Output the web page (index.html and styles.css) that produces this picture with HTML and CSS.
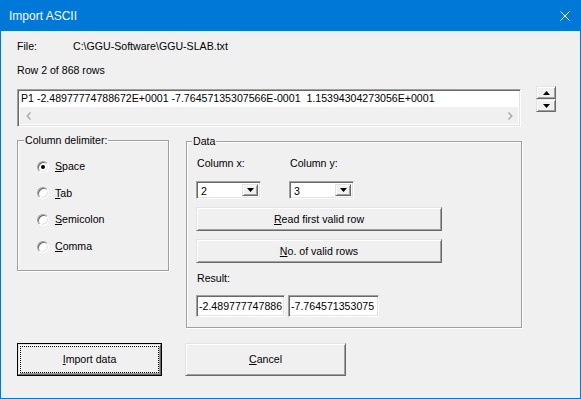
FILE: index.html
```html
<!DOCTYPE html>
<html>
<head>
<meta charset="utf-8">
<title>Import ASCII</title>
<link rel="stylesheet" href="styles.css">
</head>
<body>
<div class="window">
  <div class="titlebar">
    <span class="title">Import ASCII</span>
    <span class="close"><svg width="10" height="10" viewBox="0 0 10 10"><path d="M0.5 0.5L9.5 9.5M9.5 0.5L0.5 9.5" stroke="#fff" stroke-width="1"/></svg></span>
  </div>
  <div class="client">
    <div class="file-row"><span class="file-label">File:</span><span>C:\GGU-Software\GGU-SLAB.txt</span></div>
    <div class="row-info">Row 2 of 868 rows</div>
    <div class="preview-row">
      <div class="preview sunken">
        <div class="preview-text">P1 -2.48977774788672E+0001 -7.76457135307566E-0001&nbsp; 1.15394304273056E+0001</div>
        <div class="hscroll">
          <span class="sb-btn"><svg width="6" height="8" viewBox="0 0 6 8"><polyline points="4.5,0.5 1.2,4 4.5,7.5" fill="none" stroke="#a8a8a8" stroke-width="1.4"/></svg></span>
          <span class="sb-btn"><svg width="6" height="8" viewBox="0 0 6 8"><polyline points="1.5,0.5 4.8,4 1.5,7.5" fill="none" stroke="#a8a8a8" stroke-width="1.4"/></svg></span>
        </div>
      </div>
      <div class="spin">
        <div class="spin-btn raised"><svg width="7" height="4" viewBox="0 0 7 4"><polygon points="0,4 3.5,0 7,4" fill="#000"/></svg></div>
        <div class="spin-btn raised"><svg width="7" height="4" viewBox="0 0 7 4"><polygon points="0,0 7,0 3.5,4" fill="#000"/></svg></div>
      </div>
    </div>
    <div class="groups">
      <div class="group delim">
        <div class="legend">Column delimiter:</div>
        <div class="radio-list">
          <div class="radio-row"><span class="radio checked"></span><span><u>S</u>pace</span></div>
          <div class="radio-row"><span class="radio"></span><span><u>T</u>ab</span></div>
          <div class="radio-row"><span class="radio"></span><span><u>S</u>emicolon</span></div>
          <div class="radio-row"><span class="radio"></span><span><u>C</u>omma</span></div>
        </div>
      </div>
      <div class="group data">
        <div class="legend">Data</div>
        <div class="col-labels"><span class="col-x">Column x:</span><span>Column y:</span></div>
        <div class="combos">
          <div class="combo sunken"><span class="combo-val">2</span><span class="combo-btn raised"><svg width="7" height="4" viewBox="0 0 7 4"><polygon points="0,0 7,0 3.5,4" fill="#000"/></svg></span></div>
          <div class="combo sunken"><span class="combo-val">3</span><span class="combo-btn raised"><svg width="7" height="4" viewBox="0 0 7 4"><polygon points="0,0 7,0 3.5,4" fill="#000"/></svg></span></div>
        </div>
        <div class="btn raised wide"><span><u>R</u>ead first valid row</span></div>
        <div class="btn raised wide"><span><u>N</u>o. of valid rows</span></div>
        <div class="result-label">Result:</div>
        <div class="results">
          <div class="field sunken r1">-2.489777747886</div>
          <div class="field sunken r2">-7.764571353075</div>
        </div>
      </div>
    </div>
    <div class="actions">
      <div class="btn-default">
        <div class="btn raised fill"><div class="focus"><span><u>I</u>mport data</span></div></div>
      </div>
      <div class="btn raised cancel"><span><u>C</u>ancel</span></div>
    </div>
  </div>
</div>
</body>
</html>
```
FILE: styles.css
```css
* { box-sizing: border-box; }
html, body { margin: 0; padding: 0; background: #f0f0f0; }
body {
  font-family: "Liberation Sans", Arial, sans-serif;
  font-size: 10.6px;
  line-height: 13px;
  color: #000;
}
u { text-decoration: underline; text-underline-offset: 1px; }

.window {
  width: 581px;
  height: 399px;
  border: 1px solid #0078d7;
  border-top: 0;
  background: #f0f0f0;
  display: flex;
  flex-direction: column;
  overflow: hidden;
}
.titlebar {
  height: 31px;
  flex: none;
  background: #0078d7;
  display: flex;
  align-items: center;
  padding-left: 8px;
  color: #fff;
}
.title { font-size: 12px; line-height: 16px; }
.close {
  margin-left: auto;
  width: 30px;
  height: 31px;
  display: flex;
  align-items: center;
  justify-content: center;
}

.client { padding: 9px 0 0 16px; }

/* 3D edges */
.raised {
  background: #f0f0f0;
  border: 1px solid;
  border-color: #e3e3e3 #696969 #696969 #e3e3e3;
  box-shadow: inset 1px 1px 0 #fff, inset -1px -1px 0 #a0a0a0;
}
.sunken {
  background: #fff;
  border: 1px solid;
  border-color: #a0a0a0 #fff #fff #a0a0a0;
  box-shadow: inset 1px 1px 0 #696969, inset -1px -1px 0 #e3e3e3;
}

.file-row { display: flex; height: 13px; }
.file-label { width: 56px; }
.row-info { margin-top: 11px; }

.preview-row {
  margin-top: 9px;
  display: flex;
  align-items: flex-start;
  gap: 15px;
}
.preview {
  margin-top: 3px;
  width: 504px;
  height: 38px;
  padding: 2px;
  display: flex;
  flex-direction: column;
}
.preview-text {
  height: 17px;
  padding-left: 1px;
  white-space: nowrap;
  overflow: hidden;
}
.hscroll {
  height: 17px;
  background: #f0f0f0;
  display: flex;
  justify-content: space-between;
}
.sb-btn {
  width: 17px;
  height: 17px;
  display: flex;
  align-items: center;
  justify-content: center;
}
.spin {
  width: 20px;
  height: 26px;
  display: flex;
  flex-direction: column;
}
.spin-btn {
  height: 13px;
  display: flex;
  align-items: center;
  justify-content: center;
}
.spin-btn svg { display: block; }

.groups {
  margin-top: 13px;
  display: flex;
  align-items: flex-start;
  gap: 17px;
}
.group {
  border: 1px solid #a0a0a0;
  box-shadow: inset 1px 1px 0 #fff, 1px 1px 0 #fff;
}
.legend {
  width: fit-content;
  height: 13px;
  margin: -7px 0 -6px 6px;
  padding: 0 1px;
  background: #f0f0f0;
  white-space: nowrap;
}
.delim { width: 152px; height: 131px; }
.radio-list { padding-top: 12.3px; }
.radio-row {
  height: 26.67px;
  display: flex;
  align-items: center;
  gap: 6px;
  padding-left: 19px;
}
.radio {
  width: 12px;
  height: 12px;
  border-radius: 50%;
  background: #fff;
  border: 1px solid;
  border-color: #a0a0a0 #fff #fff #a0a0a0;
  box-shadow: inset 1px 1px 0 #696969, inset -1px -1px 0 #e3e3e3;
  display: flex;
  align-items: center;
  justify-content: center;
  flex: none;
}
.radio.checked::after {
  content: "";
  width: 4px;
  height: 4px;
  border-radius: 50%;
  background: #000;
}

.data {
  margin-top: 1px;
  width: 336px;
  height: 187px;
  padding-left: 9px;
}
.data .legend { margin-left: -4px; }
.col-labels { margin-top: 14.5px; display: flex; }
.col-x { width: 93px; padding-left: 1px; }
.col-labels span:last-child { padding-left: 1px; }
.combos { margin-top: 11.5px; display: flex; gap: 28px; }
.combo {
  width: 65px;
  height: 18px;
  padding: 2px;
  display: flex;
}
.combo-val { flex: 1; padding-left: 2px; line-height: 14px; }
.combo-btn {
  width: 16px;
  display: flex;
  align-items: center;
  justify-content: center;
}
.combo-btn svg { display: block; }

.btn {
  display: flex;
  align-items: center;
  justify-content: center;
  white-space: nowrap;
}
.wide { width: 246px; height: 24px; margin-top: 8px; }
.result-label { margin-top: 8.5px; padding-left: 1px; }
.results { margin-top: 10.5px; display: flex; gap: 3px; }
.field {
  height: 22px;
  padding: 2px 0 2px 2px;
  display: flex;
  align-items: center;
  white-space: nowrap;
  overflow: hidden;
}
.r1 { width: 89px; }
.r2 { width: 91px; }

.actions {
  margin-top: 15px;
  display: flex;
  gap: 23px;
}
.btn-default {
  width: 145px;
  height: 33px;
  border: 1px solid #000;
  display: flex;
}
.fill { flex: 1; padding: 1px; align-items: stretch; }
.focus {
  flex: 1;
  border: 1px dotted #000;
  display: flex;
  align-items: center;
  justify-content: center;
}
.cancel { width: 161px; height: 33px; }
```
